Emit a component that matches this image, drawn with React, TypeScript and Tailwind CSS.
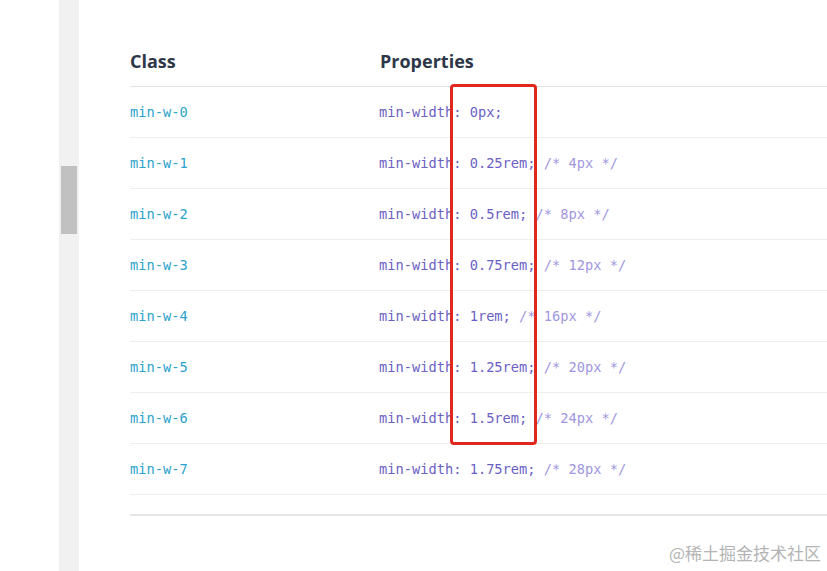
import React from "react";

const rows = [
  { c: "min-w-0", v: "0px;", cm: "" },
  { c: "min-w-1", v: "0.25rem;", cm: "/* 4px */" },
  { c: "min-w-2", v: "0.5rem;", cm: "/* 8px */" },
  { c: "min-w-3", v: "0.75rem;", cm: "/* 12px */" },
  { c: "min-w-4", v: "1rem;", cm: "/* 16px */" },
  { c: "min-w-5", v: "1.25rem;", cm: "/* 20px */" },
  { c: "min-w-6", v: "1.5rem;", cm: "/* 24px */" },
  { c: "min-w-7", v: "1.75rem;", cm: "/* 28px */" },
];

const mono = { fontFamily: '"DejaVu Sans Mono", "Liberation Mono", monospace' };

export default function App() {
  return (
    <div className="w-[827px] h-[571px] flex bg-white overflow-hidden">
      <div className="w-[59px] shrink-0 bg-white" />
      <div className="w-[20px] shrink-0 bg-[#f1f1f1] pt-[166px] px-[2px]">
        <div className="h-[68px] bg-[#c1c1c1]" />
      </div>
      <div className="relative flex-1 pt-[40px] pl-[51px]">
        <div className="font-['Open_Sans',sans-serif] text-[18px] font-bold text-[#2d3748] flex items-end h-[47px] pb-[13px] border-b border-[#e2e2e2]">
          <div className="w-[250px] leading-[24px]">Class</div>
          <div className="leading-[24px]">Properties</div>
        </div>
        <div className="text-[13.7px]" style={mono}>
          {rows.map((r) => (
            <div key={r.c} className="flex items-center h-[51px] border-b border-[#eeeeee]">
              <div className="w-[249px] text-[#2ba3cc]">{r.c}</div>
              <div className="whitespace-pre text-[#6b5fc4]">
                {"min-width: " + r.v}
                {r.cm && <span className="text-[#9f97de]">{" " + r.cm}</span>}
              </div>
            </div>
          ))}
        </div>
        <div className="mt-[19px] h-[2px] bg-[#e5e5e5]" />
        <div className="absolute left-[371px] top-[84px] w-[87px] h-[361px] border-[3px] border-[#e0281f] rounded-[4px]" />
        <div className="absolute right-[6px] bottom-[7px] text-[17px] text-[#b4b4b4] font-['Noto_Sans_CJK_SC',sans-serif] leading-[22px]">
          @稀土掘金技术社区
        </div>
      </div>
    </div>
  );
}
